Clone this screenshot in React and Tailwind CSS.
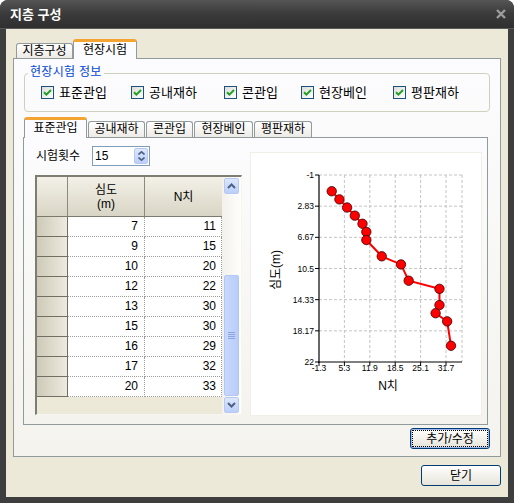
import React from 'react';

const FONT = "font-['Liberation_Sans','Noto_Sans_CJK_KR',sans-serif]";

// depth (m), N value rows visible in the grid
const rows = [
  [7, 11], [9, 15], [10, 20], [12, 22], [13, 30],
  [15, 30], [16, 29], [17, 32], [20, 33],
];

// full test series for the plot (first rows are scrolled out of the grid)
const points = [[1, 2], [2, 4], [3, 6], [4, 8], [5, 10], [6, 11], ...rows];

const Check = () => (
  <span className="w-[13px] h-[13px] border border-[#1C5180] bg-linear-to-br from-[#DCDCD7] to-white flex items-center justify-center">
    <svg width="9" height="9" viewBox="0 0 9 9">
      <path d="M1 4.3 L3.4 6.7 L8 2" fill="none" stroke="#21A121" strokeWidth="2" />
    </svg>
  </span>
);

const CheckItem = ({ label, className }) => (
  <div className={`flex items-center gap-[5px] ${className}`}>
    <Check />
    <span className="text-[13px] leading-[14px]">{label}</span>
  </div>
);

const Arrow = ({ down }) => (
  <svg width="9" height="6" viewBox="0 0 9 6">
    <path
      d={down ? 'M1 1 L4.5 4.5 L8 1' : 'M1 5 L4.5 1.5 L8 5'}
      fill="none"
      stroke="#4D6185"
      strokeWidth="2"
    />
  </svg>
);

const ScrollButton = ({ down }) => (
  <div className="w-[15px] h-[16px] mx-auto rounded-[2px] border border-[#B7C9F3] bg-linear-to-b from-[#DDE7FE] to-[#BCCFF9] flex items-center justify-center">
    <Arrow down={down} />
  </div>
);

const Chart = () => {
  const sx = (n) => 68 + ((n + 1.3) * 127) / 33;
  const sy = (d) => 22 + ((d + 1) * 187) / 23;
  const yTicks = ['-1', '2.83', '6.67', '10.5', '14.33', '18.17', '22'];
  const xTicks = ['-1.3', '5.3', '11.9', '18.5', '25.1', '31.7'];
  const line = points.map(([d, n]) => `${sx(n)},${sy(d)}`).join(' ');

  return (
    <svg width="232" height="264" className={FONT}>
      {/* grid */}
      {yTicks.map((t, i) => {
        const y = 22 + (i * 187) / 6;
        return (
          <g key={t}>
            {i < 6 && (
              <line x1="68" x2="211" y1={y} y2={y} stroke="#C4C4C4" strokeDasharray="3 2" />
            )}
            <line x1="64" x2="68" y1={y} y2={y} stroke="#000" />
            <text x="63" y={y + 3} fontSize="8.5" textAnchor="end" fill="#000">{t}</text>
          </g>
        );
      })}
      {xTicks.map((t, i) => {
        const x = 68 + (i * 127) / 5;
        return (
          <g key={t}>
            {i > 0 && (
              <line x1={x} x2={x} y1="22" y2="209" stroke="#C4C4C4" strokeDasharray="3 2" />
            )}
            <line x1={x} x2={x} y1="209" y2="213" stroke="#000" />
            <text x={x} y="218" fontSize="8.5" textAnchor="middle" fill="#000">{t}</text>
          </g>
        );
      })}
      <line x1="211" x2="211" y1="22" y2="209" stroke="#C4C4C4" strokeDasharray="3 2" />
      {/* axes */}
      <line x1="68" x2="68" y1="22" y2="210" stroke="#000" strokeWidth="1.2" />
      <line x1="67" x2="211" y1="209" y2="209" stroke="#000" strokeWidth="1.2" />
      {/* series */}
      <polyline points={line} fill="none" stroke="#FF0000" strokeWidth="2" />
      {points.map(([d, n]) => (
        <circle key={`${d}-${n}`} cx={sx(n)} cy={sy(d)} r="4.7" fill="#FF0000" stroke="#3A0000" strokeWidth="0.8" />
      ))}
      <text x="137" y="237" fontSize="12" textAnchor="middle" fill="#000">N치</text>
      <text x="25" y="121" fontSize="12" textAnchor="middle" fill="#000" transform="rotate(-90 25 117)">심도(m)</text>
    </svg>
  );
};

const Grid = () => (
  <div className="w-[207px] h-[240px] border-t-2 border-l-2 border-[#7F7D72] border-r border-b border-r-[#F6F5F0] border-b-[#F6F5F0] flex">
    <div className="w-[185px] flex flex-col bg-[#ECE9D8]">
      {/* header */}
      <div className="flex h-[40px] border-b border-[#7C7A6E]">
        <div className="w-[31px] border-r border-[#8C8A7E] bg-linear-to-b from-[#F3F1E8] to-[#D9D5C5]" />
        <div className="w-[77px] border-r border-[#8C8A7E] bg-linear-to-b from-[#F3F1E8] to-[#D9D5C5] flex flex-col items-center justify-center text-[12px] leading-[14px]">
          <span>심도</span>
          <span>(m)</span>
        </div>
        <div className="w-[77px] bg-linear-to-b from-[#F3F1E8] to-[#D9D5C5] flex items-center justify-center text-[12px]">
          N치
        </div>
      </div>
      {rows.map(([d, n]) => (
        <div key={d} className="flex h-[20px]">
          <div className="w-[31px] border-r border-b border-[#716F64] bg-linear-to-r from-[#CECAB8] to-[#EDEBDF]" />
          <div className="w-[77px] bg-white border-r border-b border-dotted border-[#9C9C9C] text-right pr-[6px] text-[12px] leading-[19px]">
            {d}
          </div>
          <div className="w-[77px] bg-white border-r border-b border-dotted border-[#9C9C9C] text-right pr-[5px] text-[12px] leading-[19px]">
            {n}
          </div>
        </div>
      ))}
      <div className="flex-1 flex">
        <div className="w-[31px] border-r border-[#716F64] h-0" />
      </div>
    </div>
    {/* vertical scrollbar */}
    <div className="w-[19px] bg-linear-to-r from-[#F3F1EC] to-[#FEFEFB] flex flex-col pt-[1px] pb-[1px]">
      <ScrollButton />
      <div className="flex-1 flex flex-col justify-end pb-[1px]">
        <div className="w-[15px] h-[121px] mx-auto rounded-[2px] border border-[#B2C7F6] bg-linear-to-r from-[#C9D8FC] to-[#B8CDF9] flex flex-col items-center justify-center gap-[1px]">
          <span className="w-[7px] h-px bg-[#8DA5E2]" />
          <span className="w-[7px] h-px bg-[#8DA5E2]" />
          <span className="w-[7px] h-px bg-[#8DA5E2]" />
          <span className="w-[7px] h-px bg-[#8DA5E2]" />
        </div>
      </div>
      <ScrollButton down />
    </div>
  </div>
);

const InnerTab = ({ label, w, active }) =>
  active ? (
    <div className={`${w} h-[21px] -mb-px relative z-10 bg-[#FCFCFE] border-x border-[#919B9C] rounded-t-[3px] border-t-[3px] border-t-[#F4A531] text-center text-[12px] leading-[16px]`}>
      {label}
    </div>
  ) : (
    <div className={`${w} h-[16px] ml-[1px] bg-linear-to-b from-white to-[#ECEBE6] border border-b-0 border-[#919B9C] rounded-t-[3px] text-center text-[12px] leading-[15px]`}>
      {label}
    </div>
  );

const XPButton = ({ label, focused, className = '' }) => (
  <button className={`w-[80px] h-[21px] rounded-[3px] border border-[#003C74] bg-linear-to-b from-white to-[#E6E4DA] p-[2px] ${className}`}>
    <div className={`w-full h-full flex items-center justify-center text-[12px] leading-[14px] ${focused ? 'outline outline-1 outline-dotted outline-black' : ''}`}>
      {label}
    </div>
  </button>
);

export default function App() {
  return (
    <div className={`w-[514px] h-[503px] bg-white ${FONT} text-black`}>
      <div className="w-full h-full rounded-t-[8px] bg-[#3E3E3E] flex flex-col">
        {/* title bar */}
        <div className="h-[29px] rounded-t-[8px] bg-linear-to-b from-[#555555] via-[#3A3A3A] to-[#2F2F2F] border-b border-[#5A5A5A] flex items-center justify-between px-[10px]">
          <span className="text-white text-[13px] font-bold leading-none">지층 구성</span>
          <svg width="10" height="10" viewBox="0 0 10 10" className="mr-[-2px]">
            <path d="M1 1 L9 9 M9 1 L1 9" stroke="#9C9C9C" strokeWidth="2.4" />
          </svg>
        </div>

        {/* client area */}
        <div className="flex-1 mx-[6px] mb-[6px] bg-[#ECE9D8] px-[7px] pt-[10px] flex flex-col">
          {/* outer tabs */}
          <div className="flex items-end h-[19px] pl-[3px]">
            <div className="w-[57px] h-[15px] bg-linear-to-b from-white to-[#ECEBE6] border border-b-0 border-[#919B9C] rounded-t-[3px] text-center text-[12px] leading-[14px]">
              지층구성
            </div>
            <div className="w-[64px] h-[20px] -mb-px relative z-10 bg-[#FCFCFE] border-x border-[#919B9C] rounded-t-[3px] border-t-[3px] border-t-[#F4A531] text-center text-[12px] leading-[16px]">
              현장시험
            </div>
          </div>

          {/* outer tab page */}
          <div className="h-[399px] border border-[#919B9C] bg-linear-to-b from-[#FCFCFE] to-[#F4F3EE] flex flex-col">
            {/* group box */}
            <div className="relative mt-[14px] ml-[10px] w-[466px] h-[39px] border border-[#D0D0BF] rounded-[4px] flex items-center pl-[16px]">
              <span className="absolute left-[3px] top-[-9px] px-[2px] bg-[#FBFBFD] text-[#0046D5] text-[12px] leading-[14px] tracking-[0.3px]">
                현장시험 정보
              </span>
              <CheckItem label="표준관입" className="w-[90px]" />
              <CheckItem label="공내재하" className="w-[93px]" />
              <CheckItem label="콘관입" className="w-[77px]" />
              <CheckItem label="현장베인" className="w-[92px]" />
              <CheckItem label="평판재하" />
            </div>

            {/* inner tabs */}
            <div className="mt-[5px] h-[20px] flex items-end pl-[10px]">
              <InnerTab label="표준관입" w="w-[63px]" active />
              <InnerTab label="공내재하" w="w-[57px]" />
              <InnerTab label="콘관입" w="w-[47px]" />
              <InnerTab label="현장베인" w="w-[59px]" />
              <InnerTab label="평판재하" w="w-[58px]" />
            </div>

            {/* inner tab page */}
            <div className="ml-[9px] w-[465px] h-[288px] border border-[#919B9C] bg-linear-to-b from-[#FCFCFE] to-[#F4F3EE] flex items-start">
              <div className="ml-[11px] pt-[8px] flex flex-col">
                <div className="flex items-center h-[20px]">
                  <span className="ml-[1px] w-[56px] text-[12px] leading-[14px]">시험횟수</span>
                  <div className="w-[58px] h-[20px] border border-[#7F9DB9] bg-white flex items-center justify-between pl-[2px] pr-[1px]">
                    <span className="text-[12px] leading-[14px]">15</span>
                    <div className="w-[14px] h-[16px] rounded-[2px] border border-[#B7C9F3] bg-linear-to-b from-[#DDE7FE] to-[#BCCFF9] flex flex-col items-center justify-center gap-[2px]">
                      <svg width="7" height="4" viewBox="0 0 7 4"><path d="M0.5 3.5 L3.5 0.8 L6.5 3.5" fill="none" stroke="#4D6185" strokeWidth="1.6" /></svg>
                      <svg width="7" height="4" viewBox="0 0 7 4"><path d="M0.5 0.5 L3.5 3.2 L6.5 0.5" fill="none" stroke="#4D6185" strokeWidth="1.6" /></svg>
                    </div>
                  </div>
                </div>
                <div className="mt-[9px]">
                  <Grid />
                </div>
              </div>
              <div className="ml-[8px] mt-[14px] w-[232px] h-[264px] bg-white border border-[#F1EFE6]">
                <Chart />
              </div>
            </div>

            <div className="mt-[3px] flex justify-end pr-[10px]">
              <XPButton label="추가/수정" focused className="shadow-[inset_0_0_0_1px_#9DB8EE]" />
            </div>
          </div>

          <div className="mt-[8px] flex justify-end">
            <XPButton label="닫기" />
          </div>
        </div>
      </div>
    </div>
  );
}
